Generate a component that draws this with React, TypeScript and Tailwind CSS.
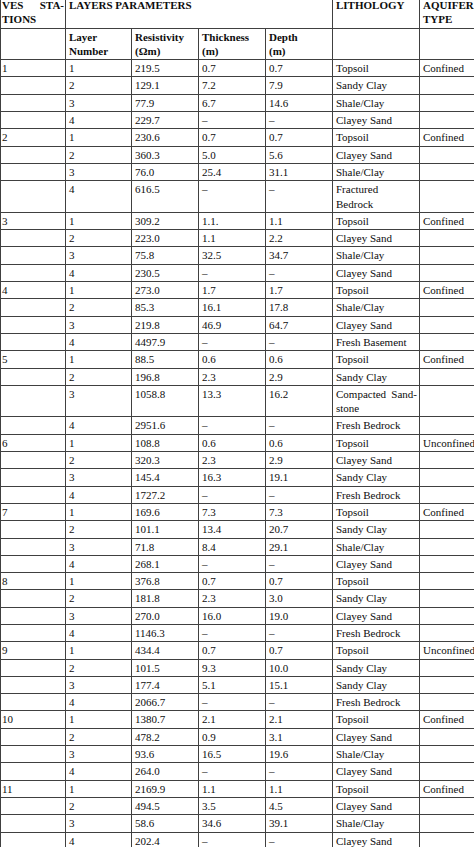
import React from "react";

type Layer = {
    n: string;
    res: string;
    thick: string;
    depth: string;
    lith: string;
};

type Station = {
    id: string;
    aquifer: string;
    layers: Layer[];
};

const L = (n: string, res: string, thick: string, depth: string, lith: string): Layer => ({
    n,
    res,
    thick,
    depth,
    lith,
});

const stations: Station[] = [
    {
        id: "1",
        aquifer: "Confined",
        layers: [
            L("1", "219.5", "0.7", "0.7", "Topsoil"),
            L("2", "129.1", "7.2", "7.9", "Sandy Clay"),
            L("3", "77.9", "6.7", "14.6", "Shale/Clay"),
            L("4", "229.7", "–", "–", "Clayey Sand"),
        ],
    },
    {
        id: "2",
        aquifer: "Confined",
        layers: [
            L("1", "230.6", "0.7", "0.7", "Topsoil"),
            L("2", "360.3", "5.0", "5.6", "Clayey Sand"),
            L("3", "76.0", "25.4", "31.1", "Shale/Clay"),
            L("4", "616.5", "–", "–", "Fractured Bedrock"),
        ],
    },
    {
        id: "3",
        aquifer: "Confined",
        layers: [
            L("1", "309.2", "1.1.", "1.1", "Topsoil"),
            L("2", "223.0", "1.1", "2.2", "Clayey Sand"),
            L("3", "75.8", "32.5", "34.7", "Shale/Clay"),
            L("4", "230.5", "–", "–", "Clayey Sand"),
        ],
    },
    {
        id: "4",
        aquifer: "Confined",
        layers: [
            L("1", "273.0", "1.7", "1.7", "Topsoil"),
            L("2", "85.3", "16.1", "17.8", "Shale/Clay"),
            L("3", "219.8", "46.9", "64.7", "Clayey Sand"),
            L("4", "4497.9", "–", "–", "Fresh Basement"),
        ],
    },
    {
        id: "5",
        aquifer: "Confined",
        layers: [
            L("1", "88.5", "0.6", "0.6", "Topsoil"),
            L("2", "196.8", "2.3", "2.9", "Sandy Clay"),
            L("3", "1058.8", "13.3", "16.2", "Compacted Sand-stone"),
            L("4", "2951.6", "–", "–", "Fresh Bedrock"),
        ],
    },
    {
        id: "6",
        aquifer: "Unconfined",
        layers: [
            L("1", "108.8", "0.6", "0.6", "Topsoil"),
            L("2", "320.3", "2.3", "2.9", "Clayey Sand"),
            L("3", "145.4", "16.3", "19.1", "Sandy Clay"),
            L("4", "1727.2", "–", "–", "Fresh Bedrock"),
        ],
    },
    {
        id: "7",
        aquifer: "Confined",
        layers: [
            L("1", "169.6", "7.3", "7.3", "Topsoil"),
            L("2", "101.1", "13.4", "20.7", "Sandy Clay"),
            L("3", "71.8", "8.4", "29.1", "Shale/Clay"),
            L("4", "268.1", "–", "–", "Clayey Sand"),
        ],
    },
    {
        id: "8",
        aquifer: "",
        layers: [
            L("1", "376.8", "0.7", "0.7", "Topsoil"),
            L("2", "181.8", "2.3", "3.0", "Sandy Clay"),
            L("3", "270.0", "16.0", "19.0", "Clayey Sand"),
            L("4", "1146.3", "–", "–", "Fresh Bedrock"),
        ],
    },
    {
        id: "9",
        aquifer: "Unconfined",
        layers: [
            L("1", "434.4", "0.7", "0.7", "Topsoil"),
            L("2", "101.5", "9.3", "10.0", "Sandy Clay"),
            L("3", "177.4", "5.1", "15.1", "Sandy Clay"),
            L("4", "2066.7", "–", "–", "Fresh Bedrock"),
        ],
    },
    {
        id: "10",
        aquifer: "Confined",
        layers: [
            L("1", "1380.7", "2.1", "2.1", "Topsoil"),
            L("2", "478.2", "0.9", "3.1", "Clayey Sand"),
            L("3", "93.6", "16.5", "19.6", "Shale/Clay"),
            L("4", "264.0", "–", "–", "Clayey Sand"),
        ],
    },
    {
        id: "11",
        aquifer: "Confined",
        layers: [
            L("1", "2169.9", "1.1", "1.1", "Topsoil"),
            L("2", "494.5", "3.5", "4.5", "Clayey Sand"),
            L("3", "58.6", "34.6", "39.1", "Shale/Clay"),
            L("4", "202.4", "–", "–", "Clayey Sand"),
        ],
    },
];

const cell = "border border-[#404040] align-top pl-[3px] pr-[2px] py-[1px]";
const first = "border border-[#404040] align-top pl-[1px] pr-[1px] py-[1px]";

const App: React.FC = () => {
    return (
        <div className="w-[474px] h-[847px] overflow-hidden bg-white">
            <table
                className="table-fixed border-collapse w-[479px] -mt-[4px] text-[11px] leading-[14.3px] text-[#0d0d0d]"
                style={{ fontFamily: '"Liberation Serif", "Times New Roman", serif' }}
            >
                <colgroup>
                    <col className="w-[65px]" />
                    <col className="w-[66px]" />
                    <col className="w-[67px]" />
                    <col className="w-[67px]" />
                    <col className="w-[67px]" />
                    <col className="w-[87px]" />
                    <col className="w-[60px]" />
                </colgroup>
                <thead>
                    <tr>
                        <th className={`${first} text-justify font-bold`}>
                            VES STA-TIONS
                        </th>
                        <th colSpan={4} className={`${cell} text-left font-bold`}>
                            LAYERS PARAMETERS
                        </th>
                        <th className={`${cell} text-left font-bold`}>LITHOLOGY</th>
                        <th className={`${cell} text-left font-bold`}>
                            AQUIFER TYPE
                        </th>
                    </tr>
                    <tr>
                        <th className={first}></th>
                        <th className={`${cell} text-left font-bold`}>
                            Layer Number
                        </th>
                        <th className={`${cell} text-left font-bold`}>
                            Resistivity (Ωm)
                        </th>
                        <th className={`${cell} text-left font-bold`}>
                            Thickness (m)
                        </th>
                        <th className={`${cell} text-left font-bold`}>
                            Depth
                            <br />
                            (m)
                        </th>
                        <th className={cell}></th>
                        <th className={cell}></th>
                    </tr>
                </thead>
                <tbody>
                    {stations.map((s) =>
                        s.layers.map((l, i) => (
                            <tr key={`${s.id}-${l.n}`}>
                                <td className={first}>{i === 0 ? s.id : ""}</td>
                                <td className={cell}>{l.n}</td>
                                <td className={cell}>{l.res}</td>
                                <td className={cell}>{l.thick}</td>
                                <td className={cell}>{l.depth}</td>
                                <td className={`${cell} text-justify`}>{l.lith}</td>
                                <td className={`${cell} whitespace-nowrap`}>
                                    {i === 0 ? s.aquifer : ""}
                                </td>
                            </tr>
                        ))
                    )}
                </tbody>
            </table>
        </div>
    );
};

export default App;
